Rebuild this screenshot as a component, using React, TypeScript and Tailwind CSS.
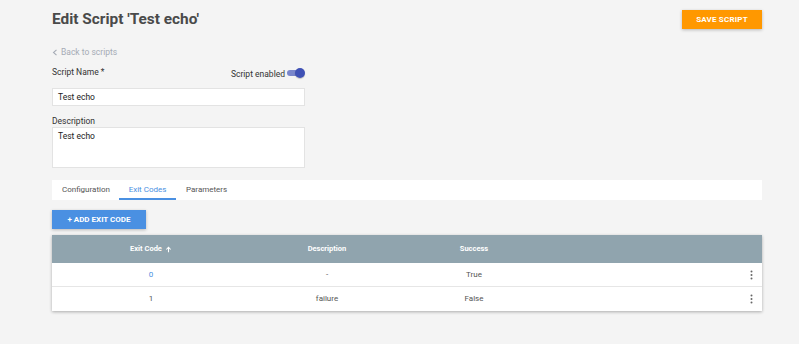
import React from "react";

export default function App() {
  const rows = [
    { code: "0", desc: "-", success: "True", blue: true },
    { code: "1", desc: "failure", success: "False", blue: false },
  ];
  return (
    <div
      className="w-[799px] h-[344px] bg-[#f4f4f4] overflow-hidden pl-[52px] pr-[37px]"
      style={{ fontFamily: "Roboto, 'Liberation Sans', sans-serif" }}
    >
      <div className="flex items-start justify-between pt-[10px] h-[40px]">
        <h1 className="text-[15.4px] font-bold text-[#4a4a4a] leading-[19px] mt-0">Edit Script 'Test echo'</h1>
        <button className="w-[80px] h-[19px] bg-[#ff9800] text-white text-[8px] font-bold tracking-[0.2px] shadow-[0_1px_3px_rgba(0,0,0,0.25)] flex items-center justify-center">
          SAVE SCRIPT
        </button>
      </div>
      <div className="flex items-center h-[24px] text-[8.5px] text-[#a5abb5] pt-[1px]">
        <svg width="6" height="7" viewBox="0 0 6 7" className="mr-[3px]">
          <path d="M4.5 0.8 L1.5 3.5 L4.5 6.2" stroke="#a5abb5" strokeWidth="1.1" fill="none" />
        </svg>
        Back to scripts
      </div>
      <div className="w-[253px]">
        <div className="flex items-start justify-between h-[18px] pt-[2px]">
          <span className="text-[8.5px] text-[#333] leading-[12px]">Script Name *</span>
          <div className="flex items-center -mt-[1px]">
            <span className="text-[8.5px] text-[#333] mr-[2px] mt-[3px]">Script enabled</span>
            <div className="relative w-[18px] h-[12px] flex items-center">
              <div className="w-[14px] h-[6px] rounded-full bg-[#7986cb]" />
              <div className="absolute right-0 top-[1px] w-[10px] h-[10px] rounded-full bg-[#3f51b5] shadow-[0_1px_1px_rgba(0,0,0,0.2)]" />
            </div>
          </div>
        </div>
        <div className="mt-[6px] h-[18px] bg-white border border-[#e3e3e3] flex items-center px-[5px] text-[8.5px] text-[#222]">
          Test echo
        </div>
        <div className="mt-[9px] text-[8.5px] text-[#333] leading-[12px]">Description</div>
        <div className="mt-0 h-[41px] bg-white border border-[#e3e3e3] px-[5px] pt-[2px] text-[8.5px] text-[#222]">
          Test echo
        </div>
      </div>
      <div className="mt-[12px] h-[20px] bg-white flex items-stretch text-[8px] text-[#555]">
        <div className="flex items-center pl-[10px] pr-[9px]">Configuration</div>
        <div className="flex items-center w-[57px] justify-center text-[#4a90e2] border-b-[2px] border-[#4a90e2] pt-[2px]">Exit Codes</div>
        <div className="flex items-center px-[10px]">Parameters</div>
      </div>
      <button className="mt-[10px] w-[94px] h-[19px] bg-[#4a90e2] text-white text-[8px] font-bold flex items-center justify-center shadow-[0_1px_3px_rgba(0,0,0,0.25)]">
        + ADD EXIT CODE
      </button>
      <div className="mt-[6px] bg-white shadow-[0_1px_3px_rgba(0,0,0,0.3)]">
        <div className="flex h-[28px] bg-[#90a4ae] text-white text-[7.5px] font-bold items-center">
          <div className="w-[198px] flex items-center justify-center">
            Exit Code
            <svg width="7" height="7" viewBox="0 0 8 8" className="ml-[3px]">
              <path d="M4 7 V1.5 M1.5 4 L4 1.5 L6.5 4" stroke="white" strokeWidth="1.2" fill="none" />
            </svg>
          </div>
          <div className="w-[154px] text-center">Description</div>
          <div className="w-[140px] text-center">Success</div>
          <div className="flex-1" />
        </div>
        {rows.map((r, i) => (
          <div
            key={r.code}
            className={`flex h-[24px] items-center text-[8px] font-normal text-[#555] ${i === 0 ? "border-b border-[#e6e6e6]" : ""}`}
          >
            <div className={`w-[198px] text-center ${r.blue ? "text-[#4a90e2]" : ""}`}>{r.code}</div>
            <div className="w-[154px] text-center">{r.desc}</div>
            <div className="w-[140px] text-center">{r.success}</div>
            <div className="flex-1 flex justify-end pr-[9px]">
              <svg width="3" height="10" viewBox="0 0 3 10">
                <circle cx="1.5" cy="1.5" r="1" fill="#666" />
                <circle cx="1.5" cy="5" r="1" fill="#666" />
                <circle cx="1.5" cy="8.5" r="1" fill="#666" />
              </svg>
            </div>
          </div>
        ))}
      </div>
    </div>
  );
}
